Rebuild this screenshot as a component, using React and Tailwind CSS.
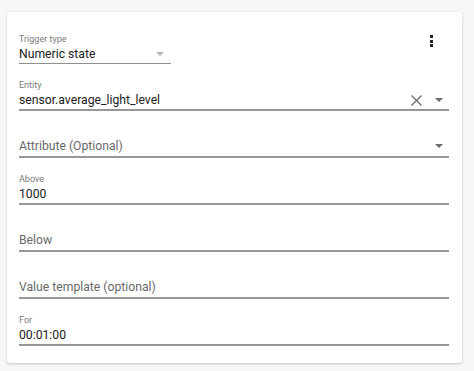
import React from 'react';

const font = { fontFamily: 'Roboto, "Liberation Sans", sans-serif' };

function Arrow({ light }) {
  return (
    <svg width="8" height="4" viewBox="0 0 8 4" className="shrink-0">
      <path d="M0 0 L8 0 L4 4 Z" fill={light ? '#b5b5b5' : '#6b6b6b'} />
    </svg>
  );
}

function Field({ label, value, placeholder, right, className = '' }) {
  return (
    <div className={`h-[47px] flex flex-col justify-end border-b-2 border-[#979797] ${className}`}>
      {label && <div className="text-[9px] leading-[12px] text-[#7a7a7a]">{label}</div>}
      <div className={`flex items-center ${placeholder ? 'pb-[1px]' : ''}`}>
        <div className={`flex-1 text-[12.2px] leading-[18px] ${placeholder ? 'text-[#6a6a6a]' : 'text-[#212121]'}`}>
          {value || placeholder}
        </div>
        {right}
      </div>
    </div>
  );
}

export default function App() {
  return (
    <div className="min-h-[371px] bg-[#f7f7f7] pt-[12px] pl-[7px]" style={font}>
      <div className="w-[455px] h-[351px] bg-white rounded-[3px] shadow-[0_1px_3px_rgba(0,0,0,0.22)] pt-[5px] pl-[12px] pr-[13px]">
        <div className="flex items-start justify-between">
          <Field
            label="Trigger type"
            value="Numeric state"
            className="w-[152px] !border-b-[1px] !border-[#8f8f8f]"
            right={<span className="mr-[7px]"><Arrow light /></span>}
          />
          <div className="mt-[18px] mr-[16px] flex flex-col gap-[1.5px]">
            <span className="block w-[3px] h-[3px] bg-[#222]" />
            <span className="block w-[3px] h-[3px] bg-[#222]" />
            <span className="block w-[3px] h-[3px] bg-[#222]" />
          </div>
        </div>
        <Field
          label="Entity"
          value="sensor.average_light_level"
          right={
            <div className="flex items-center gap-[13px] mr-[6px]">
              <svg width="11" height="11" viewBox="0 0 11 11">
                <path d="M0.5 0.5 L10.5 10.5 M10.5 0.5 L0.5 10.5" stroke="#6b6b6b" strokeWidth="1.3" />
              </svg>
              <Arrow />
            </div>
          }
        />
        <Field placeholder="Attribute (Optional)" right={<span className="mr-[6px]"><Arrow /></span>} />
        <Field label="Above" value="1000" />
        <Field placeholder="Below" />
        <Field placeholder="Value template (optional)" />
        <Field label="For" value="00:01:00" />
      </div>
    </div>
  );
}
